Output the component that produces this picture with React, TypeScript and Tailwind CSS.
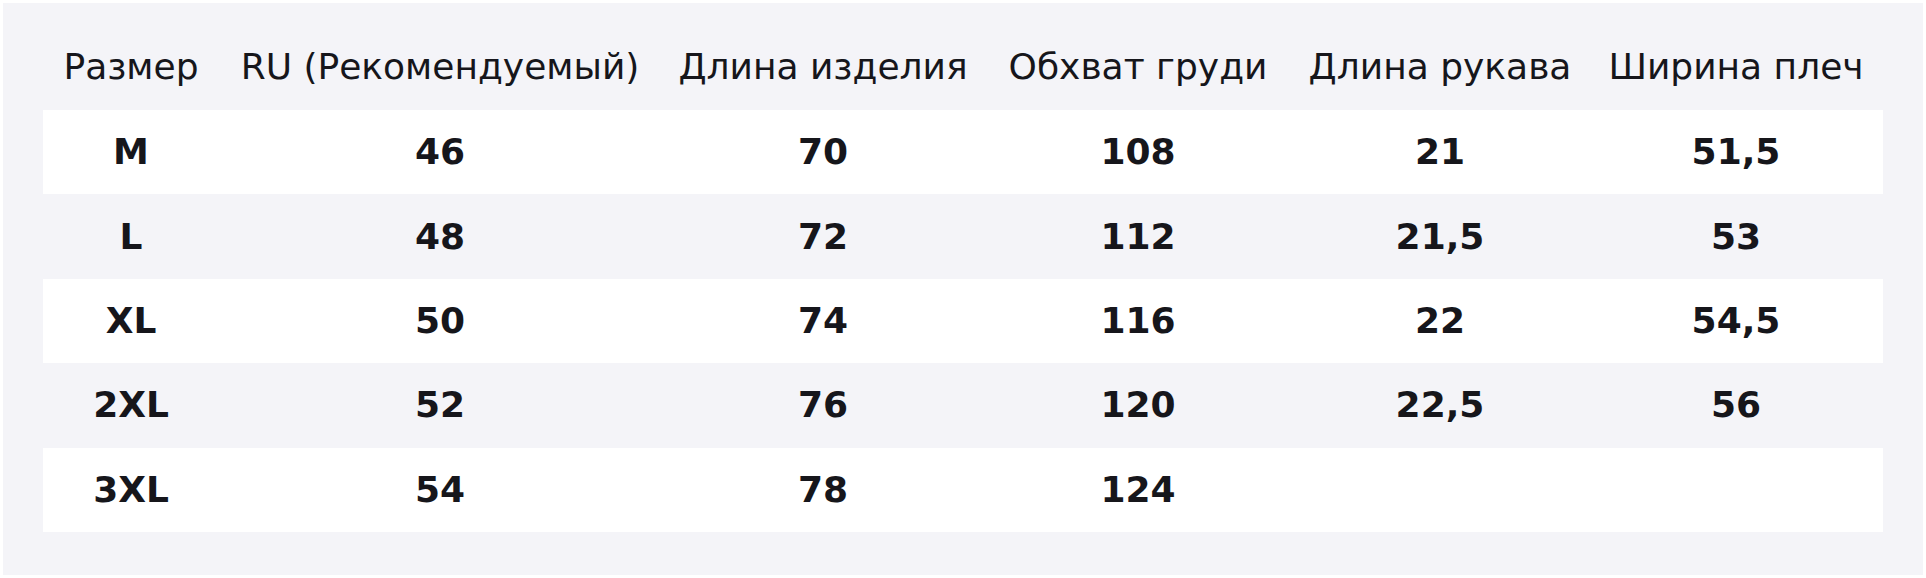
const columns = [
  'Размер',
  'RU (Рекомендуемый)',
  'Длина изделия',
  'Обхват груди',
  'Длина рукава',
  'Ширина плеч',
];

const rows: string[][] = [
  ['M', '46', '70', '108', '21', '51,5'],
  ['L', '48', '72', '112', '21,5', '53'],
  ['XL', '50', '74', '116', '22', '54,5'],
  ['2XL', '52', '76', '120', '22,5', '56'],
  ['3XL', '54', '78', '124', '', ''],
];

const grid = 'grid grid-cols-[176px_442px_324px_306px_298px_294px]';

export default function App() {
  return (
    <div className="bg-white p-[3px] font-['DejaVu_Sans',sans-serif] text-[#16161b]">
      <div className="bg-[#f4f4f8] px-[40px] pt-[43.5px] pb-[43px]">
        <div className={`${grid} pb-[23.5px] text-[36px] leading-[40px]`}>
          {columns.map(col => (
            <div key={col} className="text-center whitespace-nowrap">
              {col}
            </div>
          ))}
        </div>

        {rows.map((row, i) => (
          <div
            key={row[0]}
            className={`${grid} h-[84.4px] items-center text-[36px] font-bold leading-[40px] ${
              i % 2 === 0 ? 'bg-white' : ''
            }`}
          >
            {row.map((cell, j) => (
              <div key={j} className="text-center">
                {cell}
              </div>
            ))}
          </div>
        ))}
      </div>
    </div>
  );
}
